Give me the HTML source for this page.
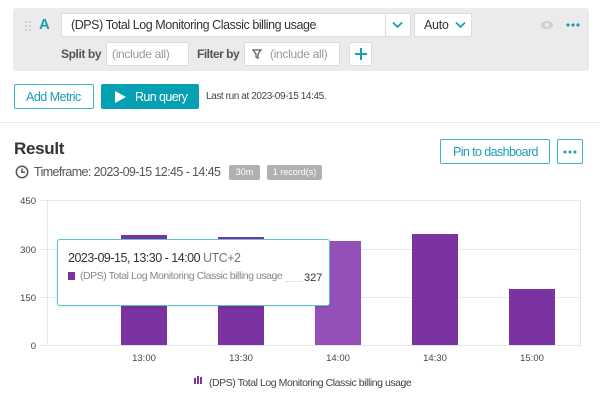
<!DOCTYPE html>
<html><head><meta charset="utf-8"><style>
*{box-sizing:border-box;margin:0;padding:0}
body{width:600px;height:409px;background:#fff;font-family:"Liberation Sans",sans-serif;position:relative;overflow:hidden;color:#454646}
.a{position:absolute}
.box{background:#fff;border:1px solid #dcdcdc;border-radius:2px}
.t{font-size:12px;white-space:nowrap}
</style></head><body>
<div class="a" style="left:13px;top:8px;width:576px;height:63px;background:#ebebeb;border-radius:3px"></div>
<svg class="a" style="left:24px;top:20px" width="8" height="12"><g fill="#c8c8c8"><circle cx="2" cy="2" r="1"/><circle cx="6" cy="2" r="1"/><circle cx="2" cy="6" r="1"/><circle cx="6" cy="6" r="1"/><circle cx="2" cy="10" r="1"/><circle cx="6" cy="10" r="1"/></g></svg>
<div class="a t" style="left:39px;top:16px;font-size:15px;font-weight:bold;color:#1a9eb3">A</div>
<div class="a box" style="left:61px;top:13px;width:350px;height:24px"></div>
<div class="a" style="left:385px;top:13px;width:1px;height:24px;background:#dcdcdc"></div>
<div class="a t" style="left:71px;top:18px;font-size:12.5px;letter-spacing:-0.45px;color:#333">(DPS) Total Log Monitoring Classic billing usage</div>
<svg class="a" style="left:392px;top:21px" width="11" height="8"><path d="M1 1.5L5.5 6L10 1.5" stroke="#1a9eb3" stroke-width="1.8" fill="none"/></svg>
<div class="a box" style="left:414px;top:13px;width:58px;height:24px"></div>
<div class="a t" style="left:424px;top:18px;font-size:12.5px;letter-spacing:-0.3px;color:#333">Auto</div>
<svg class="a" style="left:455px;top:21px" width="11" height="8"><path d="M1 1.5L5.5 6L10 1.5" stroke="#1a9eb3" stroke-width="1.8" fill="none"/></svg>
<svg class="a" style="left:540px;top:20px" width="14" height="10"><ellipse cx="7" cy="5" rx="6" ry="4" fill="#d0d0d0"/><circle cx="7" cy="5" r="2" fill="#ebebeb"/></svg>
<svg class="a" style="left:566px;top:23px" width="14" height="4"><g fill="#1a9eb3"><circle cx="2" cy="2" r="1.6"/><circle cx="7" cy="2" r="1.6"/><circle cx="12" cy="2" r="1.6"/></g></svg>
<div class="a t" style="left:61px;top:47px;font-weight:bold;letter-spacing:-0.4px;color:#555">Split by</div>
<div class="a box" style="left:106px;top:42px;width:83px;height:24px"></div>
<div class="a t" style="left:112px;top:47px;letter-spacing:-0.3px;color:#999">(include all)</div>
<div class="a t" style="left:197px;top:47px;font-weight:bold;letter-spacing:-0.5px;color:#555">Filter by</div>
<div class="a box" style="left:244px;top:42px;width:96px;height:24px"></div>
<svg class="a" style="left:252px;top:49px" width="10" height="10"><path d="M1 1H9L6 5V9L4 8V5Z" stroke="#555" stroke-width="1.2" fill="none"/></svg>
<div class="a t" style="left:270px;top:47px;letter-spacing:-0.3px;color:#999">(include all)</div>
<div class="a box" style="left:349px;top:42px;width:23px;height:24px"></div>
<svg class="a" style="left:354px;top:47px" width="14" height="14"><path d="M7 1V13M1 7H13" stroke="#1a9eb3" stroke-width="2"/></svg>
<div class="a" style="left:14px;top:84px;width:80px;height:25px;border:1px solid #3ab4c6;border-radius:2px"></div>
<div class="a t" style="left:26px;top:90px;font-size:12.5px;letter-spacing:-0.5px;color:#1a9eb3">Add Metric</div>
<div class="a" style="left:101px;top:84px;width:98px;height:25px;background:#05a0b2;border-radius:2px"></div>
<svg class="a" style="left:114px;top:90px" width="13" height="14"><path d="M1 1L12 7L1 13Z" fill="#fff"/></svg>
<div class="a t" style="left:135px;top:90px;font-size:12.5px;letter-spacing:-0.6px;color:#fff">Run query</div>
<div class="a t" style="left:206px;top:91px;font-size:10px;letter-spacing:-0.4px;color:#444">Last run at 2023-09-15 14:45.</div>
<div class="a" style="left:0;top:122px;width:600px;height:1px;background:#ececec"></div>
<div class="a t" style="left:14px;top:139px;font-size:17px;font-weight:bold;letter-spacing:-0.3px;color:#333">Result</div>
<div class="a" style="left:440px;top:139px;width:110px;height:25px;border:1px solid #3ab4c6;border-radius:2px"></div>
<div class="a t" style="left:453px;top:145px;font-size:12.5px;letter-spacing:-0.6px;color:#1a9eb3">Pin to dashboard</div>
<div class="a" style="left:557px;top:139px;width:26px;height:25px;border:1px solid #3ab4c6;border-radius:2px"></div>
<svg class="a" style="left:563px;top:150px" width="14" height="4"><g fill="#1a9eb3"><circle cx="2" cy="2" r="1.5"/><circle cx="7" cy="2" r="1.5"/><circle cx="12" cy="2" r="1.5"/></g></svg>
<svg class="a" style="left:15px;top:165px" width="14" height="14"><circle cx="7" cy="7" r="5.7" stroke="#555" stroke-width="1.5" fill="none"/><path d="M7 3.5V7.3H10" stroke="#555" stroke-width="1.5" fill="none"/></svg>
<div class="a t" style="left:34px;top:165px;font-size:12.5px;letter-spacing:-0.6px;color:#555">Timeframe: 2023-09-15 12:45 - 14:45</div>
<div class="a t" style="left:229px;top:165px;width:31px;height:15px;background:#b0b0b0;border-radius:2px;color:#fff;font-size:9px;text-align:center;line-height:15px">30m</div>
<div class="a t" style="left:267px;top:165px;width:55px;height:15px;background:#b0b0b0;border-radius:2px;color:#fff;font-size:9px;text-align:center;line-height:15px">1 record(s)</div>
<svg class="a" style="left:0;top:190px" width="600" height="219">
<g stroke="#e3e8ee" stroke-width="1"><path d="M40 10.5H581M40 59.5H581M40 107.5H581M40 155.5H581"/><path d="M47.5 10V156M580.5 10V156"/></g>
<g font-size="9.5" fill="#444" text-anchor="end" font-family="Liberation Sans,sans-serif"><text x="36" y="14">450</text><text x="36" y="63">300</text><text x="36" y="111">150</text><text x="36" y="159">0</text></g>
<g fill="#7a33a0"><rect x="121" y="45" width="46" height="110"/><rect x="218" y="47" width="46" height="108"/><rect x="412" y="44" width="46" height="111"/><rect x="509" y="99" width="46" height="56"/></g>
<rect x="315" y="51" width="46" height="104" fill="#9550b8"/>
<g font-size="9.5" fill="#444" text-anchor="middle" font-family="Liberation Sans,sans-serif"><text x="144" y="171">13:00</text><text x="241" y="171">13:30</text><text x="338" y="171">14:00</text><text x="435" y="171">14:30</text><text x="532" y="171">15:00</text></g>
<g fill="#7a33a0"><rect x="194" y="188" width="2" height="6"/><rect x="197" y="186" width="2" height="8"/><rect x="200" y="187" width="2" height="7"/></g>
<text x="209" y="196" font-size="10.5" letter-spacing="-0.45" fill="#444" font-family="Liberation Sans,sans-serif">(DPS) Total Log Monitoring Classic billing usage</text>
</svg>
<div class="a" style="left:57px;top:239px;width:273px;height:67px;background:#fff;border:1px solid #5ec4d2;border-radius:3px;box-shadow:0 1px 3px rgba(0,0,0,.1)"></div>
<div class="a t" style="left:68px;top:251px;font-size:12.5px;letter-spacing:-0.5px;color:#333">2023-09-15, 13:30 - 14:00 <span style="color:#777">UTC+2</span></div>
<div class="a" style="left:68px;top:272px;width:7px;height:8px;background:#7a33a0"></div>
<div class="a t" style="left:80px;top:270px;font-size:10.5px;letter-spacing:-0.45px;color:#888">(DPS) Total Log Monitoring Classic billing usage</div>
<div class="a" style="left:286px;top:281px;width:16px;border-top:1px dotted #ccc"></div>
<div class="a t" style="left:304px;top:272px;font-size:11px;color:#333">327</div>
</body></html>
